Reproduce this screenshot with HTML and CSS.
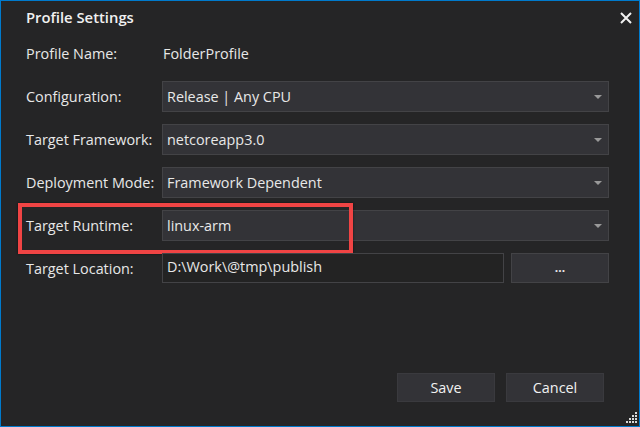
FILE: index.html
```html
<!DOCTYPE html>
<html>
<head>
<meta charset="utf-8">
<link rel="stylesheet" href="styles.css">
</head>
<body>
<div class="dialog">
  <div class="titlebar">
    <span class="title">Profile Settings</span>
    <svg class="close" width="12" height="12" viewBox="0 0 12 12"><path d="M1 1 L11 11 M11 1 L1 11" stroke="#f1f1f1" stroke-width="2"/></svg>
  </div>
  <div class="form">
    <div class="row">
      <span class="label">Profile Name:</span>
      <span class="plain">FolderProfile</span>
    </div>
    <div class="row">
      <span class="label">Configuration:</span>
      <div class="select"><span>Release | Any CPU</span><i class="arrow"></i></div>
    </div>
    <div class="row">
      <span class="label">Target Framework:</span>
      <div class="select"><span>netcoreapp3.0</span><i class="arrow"></i></div>
    </div>
    <div class="row">
      <span class="label">Deployment Mode:</span>
      <div class="select"><span>Framework Dependent</span><i class="arrow"></i></div>
    </div>
    <div class="row highlight-row">
      <span class="label">Target Runtime:</span>
      <div class="select"><span>linux-arm</span><i class="arrow"></i></div>
      <div class="highlight"></div>
    </div>
    <div class="row loc">
      <span class="label">Target Location:</span>
      <div class="textbox">D:\Work\@tmp\publish</div>
      <div class="browse">...</div>
    </div>
  </div>
  <div class="footer">
    <div class="btn">Save</div>
    <div class="btn">Cancel</div>
  </div>
  <svg class="grip" width="14" height="14" viewBox="0 0 14 14">
    <g fill="#d8d8d8">
      <rect x="11" y="1" width="2" height="2"/>
      <rect x="8" y="4" width="2" height="2"/><rect x="11" y="4" width="2" height="2"/>
      <rect x="5" y="7" width="2" height="2"/><rect x="8" y="7" width="2" height="2"/><rect x="11" y="7" width="2" height="2"/>
      <rect x="2" y="10" width="2" height="2"/><rect x="5" y="10" width="2" height="2"/><rect x="8" y="10" width="2" height="2"/><rect x="11" y="10" width="2" height="2"/>
    </g>
  </svg>
</div>
</body>
</html>
```
FILE: styles.css
```css
html, body {
  margin: 0;
  padding: 0;
  background: #252526;
}
.dialog {
  position: relative;
  width: 640px;
  height: 427px;
  box-sizing: border-box;
  border: 1px solid #007acc;
  background: #252526;
  display: flex;
  flex-direction: column;
  font-family: "Open Sans", "Noto Sans", sans-serif;
  font-size: 14.4px;
  color: #e8e8e8;
}
.titlebar {
  height: 31px;
  display: flex;
  align-items: center;
  justify-content: space-between;
  padding: 0 7px 0 25px;
}
.title {
  font-size: 14.8px;
  font-weight: 600;
  color: #f1f1f1;
}
.close {
  display: block;
  margin-top: 2px;
}
.form {
  margin-top: 6px;
  display: flex;
  flex-direction: column;
  gap: 12px;
  padding: 0 30px 0 25px;
}
.row {
  position: relative;
  display: flex;
  align-items: center;
  height: 31px;
}
.row.loc {
  height: 30px;
}
.label {
  width: 136px;
  flex: none;
  white-space: nowrap;
}
.plain {
  padding-left: 1px;
}
.select {
  flex: 1;
  height: 31px;
  box-sizing: border-box;
  background: #333337;
  border: 1px solid #434346;
  display: flex;
  align-items: center;
  justify-content: space-between;
  padding: 0 6px 0 4px;
}
.arrow {
  width: 0;
  height: 0;
  border-left: 4px solid transparent;
  border-right: 4px solid transparent;
  border-top: 4px solid #999999;
  margin-top: 1px;
}
.highlight {
  position: absolute;
  left: -8px;
  top: -7px;
  width: 335px;
  height: 51px;
  box-sizing: border-box;
  border: 4px solid #f04444;
  box-shadow: 0 0 2px rgba(0,0,0,0.6);
  pointer-events: none;
}
.textbox {
  width: 342px;
  height: 30px;
  box-sizing: border-box;
  border: 1px solid #434346;
  background: #232323;
  padding: 0 4px;
  line-height: 26px;
}
.browse {
  margin-left: 7px;
  flex: 1;
  height: 30px;
  box-sizing: border-box;
  border: 1px solid #434346;
  background: #333337;
  text-align: center;
  line-height: 28px;
  font-weight: 700;
  font-size: 12px;
}
.footer {
  margin-top: auto;
  display: flex;
  justify-content: flex-end;
  gap: 11px;
  padding: 0 35px 24px 0;
}
.btn {
  width: 98px;
  height: 29px;
  box-sizing: border-box;
  background: #333337;
  border: 1px solid #3a3a3e;
  text-align: center;
  line-height: 27px;
  color: #f1f1f1;
}
.grip {
  position: absolute;
  right: 1px;
  bottom: 1px;
}
```
